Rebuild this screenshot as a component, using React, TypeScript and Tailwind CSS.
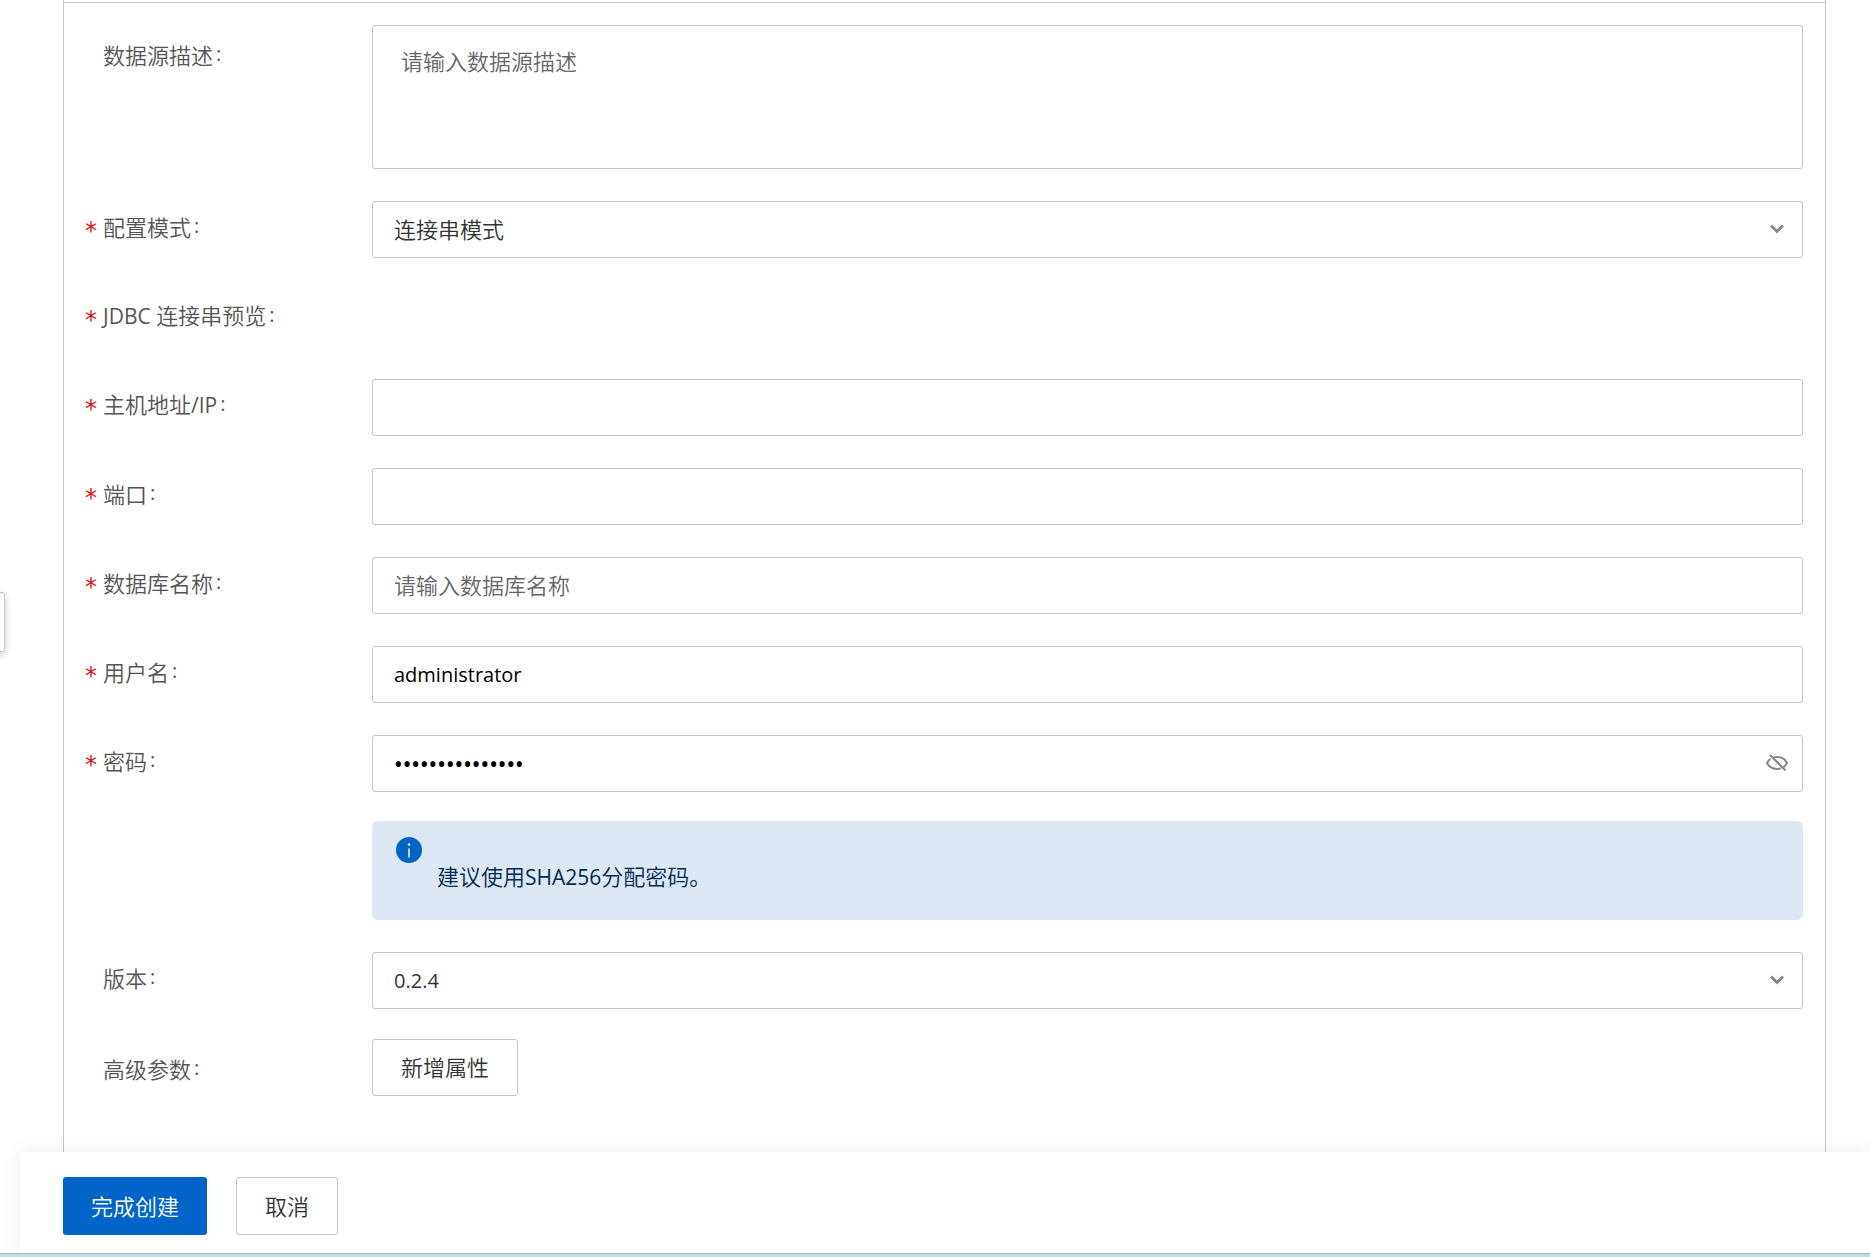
import type { ReactNode } from "react";

const control =
  "block w-full rounded-[3px] border border-[#c0c6cf] bg-white px-[21px] outline-none focus:border-[#0064c8]";

function Latin({ children }: { children: ReactNode }) {
  return <span className="font-['Open_Sans'] text-[21px] font-normal">{children}</span>;
}

function Label({ htmlFor, required, children }: { htmlFor?: string; required?: boolean; children: ReactNode }) {
  return (
    <label htmlFor={htmlFor} className="flex w-[286px] shrink-0 items-center leading-7 text-[#555]">
      <span className="w-[17px] shrink-0 pt-[10px] font-['DejaVu_Sans'] text-[24px] leading-5 font-normal text-[#d9161b]">
        <span className="-ml-px">{required ? "*" : ""}</span>
      </span>
      <span className="whitespace-pre">{children}</span>
      <span className="ml-[3px] font-['Open_Sans'] text-[20px] font-normal">:</span>
    </label>
  );
}

function Row({ id, label, required, children }: { id?: string; label: ReactNode; required?: boolean; children?: ReactNode }) {
  return (
    <div className="flex min-h-[57px] items-start">
      <div className="pt-[10px]">
        <Label htmlFor={id} required={required}>{label}</Label>
      </div>
      <div className="min-w-0 flex-1">{children}</div>
    </div>
  );
}

function Chevron() {
  return (
    <svg className="pointer-events-none absolute top-5 right-[18px] h-4 w-4" viewBox="0 0 16 16" fill="none" stroke="#888" strokeWidth="3" aria-hidden="true">
      <path d="M2 4.500l6 6 6-6" />
    </svg>
  );
}

function Select({ id, value, latin }: { id: string; value: string; latin?: boolean }) {
  return (
    <div className="relative">
      <select
        id={id}
        className={`${control} h-[57px] appearance-none text-[#333] ${latin ? "font-['Open_Sans'] text-[20px] font-normal" : "pb-[2px] text-[22px]"}`}
        defaultValue={value}
      >
        <option>{value}</option>
      </select>
      <Chevron />
    </div>
  );
}

export default function App() {
  return (
    <div className="relative flex min-h-screen flex-col overflow-hidden bg-white font-['Noto_Sans_CJK_SC',sans-serif] text-[22px] font-[350]">
      <button
        type="button"
        aria-label="展开侧栏"
        className="absolute top-[592px] -left-4 h-[60px] w-[21px] rounded-[3px] border border-[#c0c6cf] bg-white shadow-[0_3px_8px_rgba(0,0,0,0.2)]"
      />
      <main className="mr-11 ml-[63px] flex-1 border-x border-[#c0c4cb] pt-[2px]">
        <form className="flex flex-col gap-8 border-t border-[#c0c8d0] pt-[22px] pr-[22px] pb-14 pl-[22px]">
          <div className="flex items-start">
            <div className="pt-[14px]">
              <Label htmlFor="desc">数据源描述</Label>
            </div>
            <textarea
              id="desc"
              placeholder="请输入数据源描述"
              className="block h-36 min-w-0 flex-1 resize-none rounded-[3px] border border-[#c0c6cf] px-7 pt-[18px] pb-4 text-[22px] leading-8 outline-none placeholder:text-[#666]"
            />
          </div>
          <Row id="mode" label="配置模式" required>
            <Select id="mode" value="连接串模式" />
          </Row>
          <Row label={<><Latin>JDBC </Latin>连接串预览</>} required />
          <Row id="host" label={<>主机地址<Latin>/IP</Latin></>} required>
            <input id="host" className={`${control} h-[57px]`} />
          </Row>
          <Row id="port" label="端口" required>
            <input id="port" className={`${control} h-[57px]`} />
          </Row>
          <Row id="db" label="数据库名称" required>
            <input id="db" placeholder="请输入数据库名称" className={`${control} h-[57px] pb-1 text-[22px] placeholder:text-[#666]`} />
          </Row>
          <Row id="user" label="用户名" required>
            <input id="user" defaultValue="administrator" className={`${control} h-[57px] font-['Open_Sans'] text-[20px] font-normal text-black`} />
          </Row>
          <Row id="pwd" label="密码" required>
            <div className="relative">
              <input id="pwd" type="password" defaultValue="administrator12" className={`${control} h-[57px] font-['Noto_Sans'] text-[23px] font-normal text-black`} />
              <button type="button" aria-label="显示密码" className="absolute top-4 right-[14px] h-6 w-6">
                <svg viewBox="0 0 24 24" fill="none" stroke="#888" strokeWidth="2" aria-hidden="true">
                  <path d="M8 6.600A12 12 0 0 1 12 6c4.500 0 8 2 10 6-.9 1.800-2.100 3.200-3.500 4.200M5.500 7.800C4 8.800 2.900 10.200 2 12c2 4 5.500 6 10 6a12 12 0 0 0 4-.6" />
                  <path d="M5 4l15.500 15.500" />
                  <path d="M11 12.500v1.500M13 11h1" strokeWidth="1" />
                </svg>
              </button>
            </div>
            <div className="mt-[29px] flex h-[99px] gap-[15px] rounded-[6px] bg-[#dee8f4] pt-4 pl-6">
              <svg className="h-[26px] w-[26px] shrink-0" viewBox="0 0 26 26" aria-hidden="true">
                <circle cx="13" cy="13" r="13" fill="#0064c8" />
                <path d="M13 11.500v9" stroke="#fff" strokeWidth="1.500" />
                <circle cx="13" cy="7.500" r="1.300" fill="#fff" />
              </svg>
              <p className="pt-[22px] leading-8 text-[#002a54]">建议使用<Latin>SHA256</Latin>分配密码。</p>
            </div>
          </Row>
          <Row id="version" label="版本">
            <Select id="version" value="0.2.4" latin />
          </Row>
          <div className="-mt-[2px] flex items-center">
            <Label htmlFor="add">高级参数</Label>
            <button id="add" type="button" className="h-[57px] rounded-[3px] border border-[#c0c6cf] bg-white px-7 pb-[2px] text-[#333]">
              新增属性
            </button>
          </div>
        </form>
      </main>
      <footer className="relative ml-5 flex h-[101px] items-start gap-[29px] bg-white pt-[25px] pl-[43px] shadow-[0_0_20px_rgba(0,0,0,0.08)]">
        <button type="button" className="h-[58px] rounded-[3px] bg-[#0064c8] px-7 pb-[2px] text-white">完成创建</button>
        <button type="button" className="h-[58px] rounded-[3px] border border-[#c0c6cf] bg-white px-7 pb-[2px] text-[#333]">取消</button>
      </footer>
      <div className="relative h-1 border-t border-[#a9bcc3] bg-[#c5dde1]" />
    </div>
  );
}
